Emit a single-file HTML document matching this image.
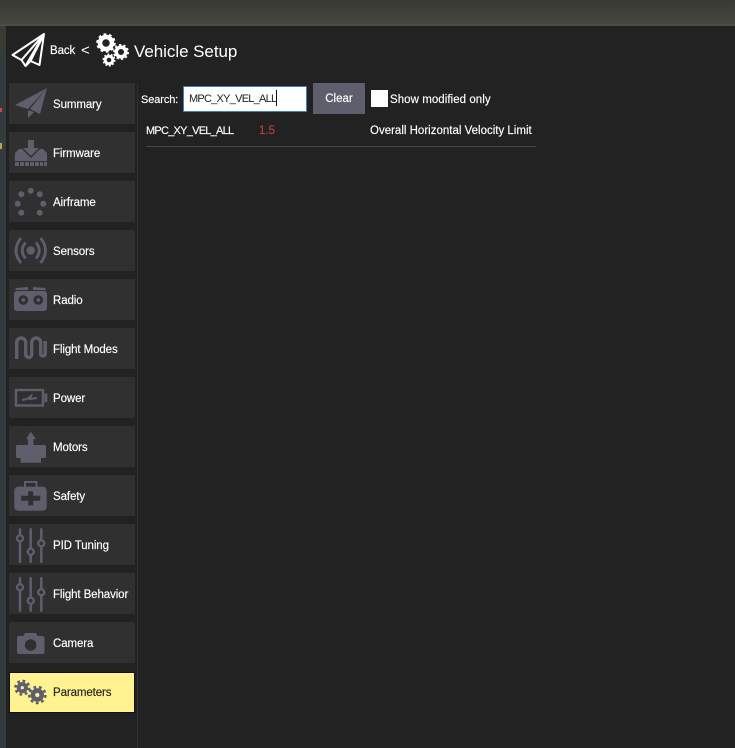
<!DOCTYPE html>
<html><head><meta charset="utf-8">
<style>
html,body{margin:0;padding:0}
body{width:735px;height:748px;overflow:hidden;background:#222;position:relative;font-family:"Liberation Sans",sans-serif;color:#fff;font-size:12px}
.a{position:absolute;white-space:nowrap}
.top{left:0;top:0;width:735px;height:24px;background:linear-gradient(#383933,#47473f);border-bottom:2px solid #4d4d48}
.left{left:0;top:50px;width:6px;height:698px;background:#343b3d}
.left2{left:0;top:26px;width:6px;height:24px;background:#3a3a36}
.vline{left:137px;top:83px;width:1px;height:665px;background:#303030}
.b{position:absolute;left:9px;width:126px;height:41px;background:#303030}
.b span{position:absolute;left:44px;top:15px;font-size:11.5px;line-height:15px;white-space:nowrap;letter-spacing:-.1px;-webkit-text-stroke:.15px currentColor}
.b svg{position:absolute;left:0;top:0}
.b.on{background:#fff291;color:#222;box-shadow:inset 0 0 0 1px #111}
.b.on span{top:13px}
</style></head><body>
<div class="a top"></div>
<div class="a left"></div>
<div class="a left2"></div>
<div class="a" style="left:0;top:108px;width:2px;height:4px;background:#c44"></div>
<div class="a" style="left:0;top:143px;width:2px;height:6px;background:#c9a050"></div>
<div class="a vline"></div>

<svg class="a" style="left:11px;top:33px" width="36" height="36" viewBox="0 0 36 36" fill="none" stroke="#fff" stroke-width="2" stroke-linejoin="round"><path d="M33 1 1.500 22l9 5 4 6 5-5 9 4z"/><path d="M33 1 10.500 27M33 1 14.500 33M33 1 19.500 28"/></svg>
<div class="a" style="left:50px;top:44px;font-size:11.5px;line-height:15px;letter-spacing:-.1px;-webkit-text-stroke:.15px #fff">Back</div>
<div class="a" style="left:81px;top:42px;font-size:15px;line-height:18px">&lt;</div>
<svg class="a" style="left:96px;top:33px" width="34" height="36" viewBox="0 0 34 36">
<g fill="none" stroke="#fff">
<circle cx="10" cy="10" r="6" stroke-width="4.500"/><circle cx="10" cy="10" r="8.500" stroke-width="2.500" stroke-dasharray="2.700 2.640"/>
<circle cx="25" cy="19" r="4.800" stroke-width="3.600"/><circle cx="25" cy="19" r="7" stroke-width="2" stroke-dasharray="2.200 2.200"/>
<circle cx="13" cy="27" r="3.800" stroke-width="3"/><circle cx="13" cy="27" r="5.600" stroke-width="1.800" stroke-dasharray="1.800 1.720"/>
</g></svg>
<div class="a" style="left:134px;top:41px;font-size:17px;line-height:22px;letter-spacing:-.05px">Vehicle Setup</div>

<div class="a" style="left:141px;top:93px;font-size:11px;line-height:15px;letter-spacing:-.1px;-webkit-text-stroke:.15px #fff">Search:</div>
<div class="a" style="left:183px;top:86px;width:124px;height:26px;background:#fff;border:1px solid #3f7fc4;box-sizing:border-box"></div>
<div class="a" style="left:189px;top:92px;font-size:11px;line-height:15px;color:#222;letter-spacing:-.75px">MPC_XY_VEL_ALL</div>
<div class="a" style="left:276px;top:90px;width:1px;height:16px;background:#111"></div>
<div class="a" style="left:313px;top:83px;width:52px;height:31px;background:#5e5e6c;text-align:center;font-size:11.5px;line-height:33px;-webkit-text-stroke:.15px #fff">Clear</div>
<div class="a" style="left:371px;top:90px;width:17px;height:17px;background:#fff"></div>
<div class="a" style="left:390px;top:93px;font-size:11.5px;line-height:15px;letter-spacing:.05px;-webkit-text-stroke:.15px #fff">Show modified only</div>

<div class="a" style="left:146px;top:124px;font-size:11px;line-height:15px;letter-spacing:-.75px;-webkit-text-stroke:.15px #fff">MPC_XY_VEL_ALL</div>
<div class="a" style="left:259px;top:124px;font-size:11.5px;line-height:15px;color:#b9403c;-webkit-text-stroke:.15px #b9403c">1.5</div>
<div class="a" style="left:370px;top:124px;font-size:11.5px;line-height:15px;-webkit-text-stroke:.15px #fff">Overall Horizontal Velocity Limit</div>
<div class="a" style="left:146px;top:146px;width:390px;height:1px;background:#454545"></div>

<div class="b" style="top:83px"><svg width="44" height="41" viewBox="0 0 44 41" fill="#5e5e6c"><path d="M38 5 6 22l13 4zM38 5 21 26l10 5zM19 27v8l6-6z"/></svg><span>Summary</span></div>
<div class="b" style="top:132px"><svg width="44" height="41" viewBox="0 0 44 41" fill="#5e5e6c"><path d="M19 8h6v8h5l-8 8-8-8h5z"/><path d="M6 29v-8l4-4h3l9 9 9-9h3l4 4v8z"/><path d="M6 30h4v4H6zM11 30h4v4h-4zM16 30h4v4h-4zM21 30h4v4h-4zM26 30h4v4h-4zM31 30h3v4h-3zM35 30h3v4h-3z"/></svg><span>Firmware</span></div>
<div class="b" style="top:181px"><svg width="44" height="41" viewBox="0 0 44 41" fill="#5e5e6c"><circle cx="21.700" cy="9.700" r="3"/><circle cx="12.300" cy="13.300" r="3"/><circle cx="30.700" cy="13.300" r="3"/><circle cx="8.700" cy="22.700" r="3"/><circle cx="34.300" cy="22.700" r="3"/><circle cx="12.300" cy="31.700" r="3"/><circle cx="30.700" cy="31.700" r="3"/></svg><span>Airframe</span></div>
<div class="b" style="top:230px"><svg width="44" height="41" viewBox="0 0 44 41" fill="none" stroke="#5e5e6c" stroke-width="2.800"><circle cx="21.700" cy="20.500" r="4.200" fill="#5e5e6c" stroke="none"/><path d="M16.500 12.500Q10 20.500 16.500 28.500M27 12.500Q33.500 20.500 27 28.500"/><path d="M12 8Q2 20.500 12 33M31.500 8Q41.500 20.500 31.500 33"/></svg><span>Sensors</span></div>
<div class="b" style="top:279px"><svg width="44" height="41" viewBox="0 0 44 41"><path d="M7 9l12-1v3H6zM36 9l-12-1v3h13z" fill="#5e5e6c"/><path d="M7 12h29l2 2v15a3 3 0 0 1-3 3H8a3 3 0 0 1-3-3V14z" fill="#5e5e6c"/><circle cx="14.300" cy="21" r="4.800" fill="#303030"/><circle cx="14.300" cy="21" r="1.900" fill="#5e5e6c"/><circle cx="29.300" cy="21" r="4.800" fill="#303030"/><circle cx="29.300" cy="21" r="1.900" fill="#5e5e6c"/></svg><span>Radio</span></div>
<div class="b" style="top:328px"><svg width="44" height="41" viewBox="0 0 44 41" fill="none" stroke="#5e5e6c" stroke-width="3.400"><path d="M7.700 31V14.500a4.500 4.500 0 0 1 9 0v12a3 3 0 0 0 6 0v-12a4.500 4.500 0 0 1 9 0v12a2.500 2.500 0 0 0 4.500 0V13"/></svg><span>Flight Modes</span></div>
<div class="b" style="top:377px"><svg width="44" height="41" viewBox="0 0 44 41" fill="none" stroke="#5e5e6c"><rect x="7" y="13" width="27" height="15.500" stroke-width="2.400"/><rect x="35.500" y="16.500" width="2.800" height="8.500" fill="#5e5e6c" stroke="none"/><path d="M13 23l5-1 4-3-1 3 7-1" stroke-width="2"/></svg><span>Power</span></div>
<div class="b" style="top:426px"><svg width="44" height="41" viewBox="0 0 44 41" fill="#5e5e6c"><path d="M21.700 5.700 27 13h-2.500v6h-5.600v-6H17z"/><path d="M8 19h28l1 1v11l-1 1h-4v4.700H11.700V32H8l-1-1V20z"/></svg><span>Motors</span></div>
<div class="b" style="top:475px"><svg width="44" height="41" viewBox="0 0 44 41"><path d="M16 12V7h11.500v5" fill="none" stroke="#5e5e6c" stroke-width="2"/><rect x="5.300" y="11.700" width="32.400" height="24" rx="4" fill="#5e5e6c"/><path d="M19.200 16.300h5v4.500h7v5h-7v4.500h-5v-4.500h-7v-5h7z" fill="#303030"/></svg><span>Safety</span></div>
<div class="b" style="top:524px"><svg width="44" height="41" viewBox="0 0 44 41" fill="none" stroke="#5e5e6c"><path d="M11 5.300v32.400M21.700 5.300v32.400M32.300 5.300v32.400" stroke-width="2.500" stroke-linecap="round"/><circle cx="11" cy="14.300" r="3" fill="#303030" stroke-width="2.400"/><circle cx="21.700" cy="27.700" r="3" fill="#303030" stroke-width="2.400"/><circle cx="32.300" cy="19.300" r="3" fill="#303030" stroke-width="2.400"/></svg><span>PID Tuning</span></div>
<div class="b" style="top:573px"><svg width="44" height="41" viewBox="0 0 44 41" fill="none" stroke="#5e5e6c"><path d="M11 5.300v32.400M21.700 5.300v32.400M32.300 5.300v32.400" stroke-width="2.500" stroke-linecap="round"/><circle cx="11" cy="14.300" r="3" fill="#303030" stroke-width="2.400"/><circle cx="21.700" cy="27.700" r="3" fill="#303030" stroke-width="2.400"/><circle cx="32.300" cy="19.300" r="3" fill="#303030" stroke-width="2.400"/></svg><span>Flight Behavior</span></div>
<div class="b" style="top:622px"><svg width="44" height="41" viewBox="0 0 44 41"><path d="M10 14h4.500l1.500-3h11l1.500 3h5a2 2 0 0 1 2 2v14a2 2 0 0 1-2 2H10a2 2 0 0 1-2-2V16a2 2 0 0 1 2-2z" fill="#5e5e6c"/><circle cx="21.700" cy="23" r="5.800" fill="#303030"/></svg><span>Camera</span></div>
<div class="b on" style="top:672px"><svg width="44" height="41" viewBox="0 0 44 41" fill="none" stroke="#5e5e6c"><circle cx="13.300" cy="15.700" r="3.600" stroke-width="4"/><circle cx="13.300" cy="15.700" r="6.800" stroke-width="2.600" stroke-dasharray="2.700 2.640"/><circle cx="28.300" cy="23" r="4.400" stroke-width="4.600"/><circle cx="28.300" cy="23" r="8" stroke-width="2.600" stroke-dasharray="2.800 2.790"/></svg><span style="top:14px">Parameters</span></div>
</body></html>
